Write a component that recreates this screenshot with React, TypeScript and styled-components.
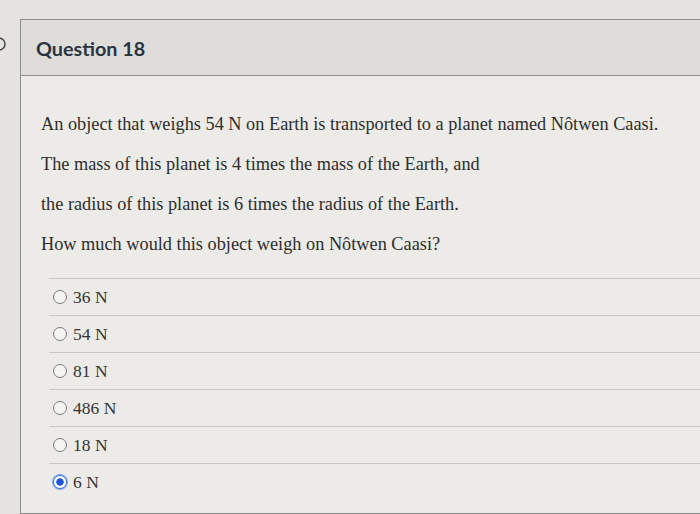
import * as React from 'react'
import styled, { createGlobalStyle } from 'styled-components'

const GlobalStyle = createGlobalStyle`
    html, body {
        margin: 0;
        padding: 0;
        background: #e4e3df;
        overflow: hidden;
    }
`

const Page = styled.div`
    display: flex;
    width: 700px;
    height: 514px;
    padding-top: 19px;
    box-sizing: border-box;
    overflow: hidden;
`

const Gutter = styled.div`
    flex: 0 0 20px;
    display: flex;
    justify-content: flex-start;
    padding-top: 17px;
`

const CollapseIcon = styled.svg`
    margin-left: -9px;
    width: 16px;
    height: 16px;
`

const Card = styled.div`
    flex: 0 0 720px;
    border: 1px solid #8d8d8a;
    border-right: none;
    background: #ecebe7;
`

const Header = styled.div`
    height: 55px;
    display: flex;
    align-items: center;
    padding-left: 15px;
    background: #dedddA;
    border-bottom: 1px solid #8d8d8a;
    font-family: Lato, 'Noto Sans', sans-serif;
    font-weight: 700;
    font-size: 19.8px;
    color: #2b3541;
`

const Body = styled.div`
    padding: 28px 0 0 20px;
`

const QuestionLine = styled.p`
    margin: 0;
    font-family: 'Liberation Serif', 'Times New Roman', serif;
    font-size: 18.3px;
    line-height: 40px;
    color: #2f2e2d;
`

const Answers = styled.div`
    margin: 14px 0 0 8px;
`

const AnswerRow = styled.label`
    display: flex;
    align-items: center;
    gap: 6px;
    height: 36px;
    padding-left: 4px;
    border-top: 1px solid #c9c8c4;
    font-family: 'Liberation Serif', 'Times New Roman', serif;
    font-size: 17.5px;
    color: #363534;
`

const Radio = styled.span<{ $checked?: boolean }>`
    width: 14px;
    height: 14px;
    box-sizing: border-box;
    border-radius: 50%;
    border: 1px solid ${(p) => (p.$checked ? '#2f6ed8' : '#7d7c7a')};
    background: ${(p) =>
        p.$checked
            ? 'radial-gradient(circle, #1f56d6 0 3.4px, #ffffff 4px)'
            : '#f4f4f1'};
    box-shadow: ${(p) => (p.$checked ? '0 0 0 1px #7fa6ec' : 'none')};
`

const questionLines = [
    'An object that weighs 54 N on Earth is transported to a planet named Nôtwen Caasi.',
    'The mass of this planet is 4 times the mass of the Earth, and',
    'the radius of this planet is 6 times the radius of the Earth.',
    'How much would this object weigh on Nôtwen Caasi?',
]

const answers = ['36 N', '54 N', '81 N', '486 N', '18 N', '6 N']

export default function App() {
    const selected = '6 N'
    return (
        <>
            <GlobalStyle />
            <Page>
                <Gutter>
                    <CollapseIcon viewBox="0 0 16 16">
                        <circle cx="8" cy="8" r="6" fill="none" stroke="#4a4c52" strokeWidth="1.6" />
                    </CollapseIcon>
                </Gutter>
                <Card>
                    <Header>Question 18</Header>
                    <Body>
                        {questionLines.map((line) => (
                            <QuestionLine key={line}>{line}</QuestionLine>
                        ))}
                        <Answers>
                            {answers.map((a) => (
                                <AnswerRow key={a}>
                                    <Radio $checked={a === selected} />
                                    {a}
                                </AnswerRow>
                            ))}
                        </Answers>
                    </Body>
                </Card>
            </Page>
        </>
    )
}
